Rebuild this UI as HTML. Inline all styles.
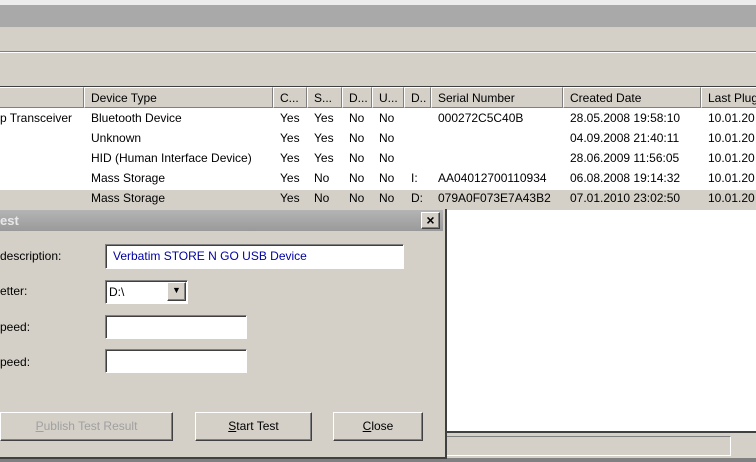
<!DOCTYPE html>
<html><head><style>
*{margin:0;padding:0;box-sizing:border-box}
body{width:756px;height:462px;overflow:hidden;background:#d4d0c8;font-family:"Liberation Sans",Arial,sans-serif;font-size:12px;color:#000;position:relative}
.a{position:absolute}
.hdr{top:87px;height:21px;background:#d4d0c8;border-right:1px solid #808080;border-bottom:1px solid #808080;border-top:1px solid #fff;border-left:1px solid #fff;padding:3px 0 0 6px;white-space:nowrap;overflow:hidden}
.t{position:absolute;white-space:nowrap;line-height:20px}
.in{background:#fff;border:1px solid #808080;border-right-color:#fff;border-bottom-color:#fff;box-shadow:inset 1px 1px 0 #404040}
.btn{border:1px solid #fff;border-right-color:#404040;border-bottom-color:#404040;box-shadow:inset -1px -1px 0 #808080;text-align:center;line-height:26px;background:#d4d0c8}
</style></head><body>
<div class="a" style="left:0;top:0;width:756px;height:5px;background:#ececec"></div>
<div class="a" style="left:0;top:5px;width:756px;height:22px;background:#a9a9a9"></div>
<div class="a" style="left:0;top:51px;width:756px;height:1px;background:#808080"></div>
<div class="a" style="left:0;top:52px;width:756px;height:1px;background:#fff"></div>
<div class="a" style="left:0;top:86px;width:756px;height:1px;background:#404040"></div>
<div class="a" style="left:0;top:108px;width:756px;height:324px;background:#fff"></div>
<div class="a" style="left:0;top:190px;width:756px;height:20px;background:#d4d0c8"></div>
<div class="a hdr" style="left:-2px;width:86px"></div>
<div class="a hdr" style="left:84px;width:189px">Device Type</div>
<div class="a hdr" style="left:273px;width:34px">C...</div>
<div class="a hdr" style="left:307px;width:35px">S...</div>
<div class="a hdr" style="left:342px;width:30px">D...</div>
<div class="a hdr" style="left:372px;width:32px">U...</div>
<div class="a hdr" style="left:404px;width:27px">D..</div>
<div class="a hdr" style="left:431px;width:132px">Serial Number</div>
<div class="a hdr" style="left:563px;width:138px">Created Date</div>
<div class="a hdr" style="left:701px;width:60px">Last Plug</div>
<div style="position:absolute;left:0;top:108px;width:756px;height:102px;overflow:hidden">
<div class="t" style="left:0;top:0">p Transceiver</div>
<div class="t" style="left:91px;top:0">Bluetooth Device<br>Unknown<br>HID (Human Interface Device)<br>Mass Storage<br>Mass Storage</div>
<div class="t" style="left:280px;top:0">Yes<br>Yes<br>Yes<br>Yes<br>Yes</div>
<div class="t" style="left:314px;top:0">Yes<br>Yes<br>Yes<br>No<br>No</div>
<div class="t" style="left:349px;top:0">No<br>No<br>No<br>No<br>No</div>
<div class="t" style="left:379px;top:0">No<br>No<br>No<br>No<br>No</div>
<div class="t" style="left:411px;top:60px">I:<br>D:</div>
<div class="t" style="left:438px;top:0">000272C5C40B</div><div class="t" style="left:438px;top:60px">AA04012700110934<br>079A0F073E7A43B2</div>
<div class="t" style="left:570px;top:0">28.05.2008 19:58:10<br>04.09.2008 21:40:11<br>28.06.2009 11:56:05<br>06.08.2008 19:14:32<br>07.01.2010 23:02:50</div>
<div class="t" style="left:708px;top:0">10.01.20<br>10.01.20<br>10.01.20<br>10.01.20<br>10.01.20</div>
</div>
<div class="a" style="left:0;top:431px;width:756px;height:2px;background:#404040"></div>
<div class="a" style="left:446px;top:436px;width:285px;height:20px;border:1px solid #808080;border-right-color:#fff;border-bottom-color:#fff"></div>
<div class="a" style="left:0;top:458px;width:756px;height:4px;background:#808080"></div>
<div class="a" style="left:0;top:209px;width:447px;height:250px;background:#d4d0c8;border-right:2px solid #404040;border-bottom:2px solid #404040"></div>
<div class="a" style="left:0;top:210px;width:443px;height:21px;background:linear-gradient(#b4b4b4,#9a9a9a);color:#e8e8e8;font-weight:bold;padding:3px 0 0 0;font-size:13px">est</div>
<div class="a btn" style="left:421px;top:212px;width:19px;height:17px;line-height:14px;font-size:14px;font-weight:bold">×</div>
<div class="t" style="left:0;top:246px">description:</div>
<div class="t" style="left:0;top:281px">etter:</div>
<div class="t" style="left:0;top:317px">peed:</div>
<div class="t" style="left:0;top:352px">peed:</div>
<div class="a in" style="left:105px;top:244px;width:299px;height:25px;color:#0000a0;padding:4px 0 0 7px">Verbatim STORE N GO USB Device</div>
<div class="a in" style="left:105px;top:280px;width:83px;height:24px;padding:4px 0 0 3px">D:\</div>
<div class="a btn" style="left:167px;top:282px;width:19px;height:19px;line-height:14px;font-size:9px">▼</div>
<div class="a in" style="left:105px;top:315px;width:142px;height:24px"></div>
<div class="a in" style="left:105px;top:349px;width:142px;height:24px"></div>
<div class="a btn" style="left:0;top:412px;width:173px;height:29px;color:#a0a0a0"><u>P</u>ublish Test Result</div>
<div class="a btn" style="left:195px;top:412px;width:117px;height:29px"><u>S</u>tart Test</div>
<div class="a btn" style="left:333px;top:412px;width:90px;height:29px"><u>C</u>lose</div>
</body></html>
